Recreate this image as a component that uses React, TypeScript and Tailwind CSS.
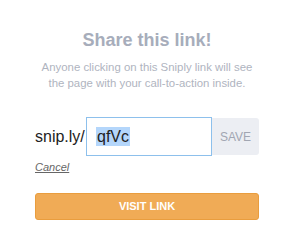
import React from "react";

export default function App() {
  return (
    <div className="w-[300px] h-[250px] bg-white overflow-hidden" style={{ fontFamily: '"Liberation Sans", Arial, sans-serif' }}>
      <div className="ml-[35px] w-[224px] flex flex-col">
        <div className="mt-[29px] text-center text-[18px] font-bold text-[#a7adbb] leading-[22px]">Share this link!</div>
        <div className="mt-[8px] text-center text-[11.4px] leading-[16px] text-[#afb4c0]">
          Anyone clicking on this Sniply link will see<br />the page with your call-to-action inside.
        </div>
        <div className="mt-[26px] flex items-center">
          <span className="text-[16px] text-[#222] w-[51px]">snip.ly/</span>
          <div className="h-[39px] w-[126px] border border-[#8dc0ec] bg-white flex items-center pl-[9px]">
            <span className="text-[16px] text-[#222] bg-[#b4d6fb] leading-[19px] px-[1px]">qfVc</span>
          </div>
          <div className="h-[37px] w-[47px] bg-[#eceef3] rounded-r-[3px] flex items-center justify-center text-[12px] text-[#a1a6b2]">SAVE</div>
        </div>
        <div className="mt-[3px] text-[11px] italic underline text-[#666]">Cancel</div>
        <div className="mt-[17px] h-[27px] rounded-[3px] bg-[#f0ab56] border border-[#e99d3e] flex items-center justify-center text-white font-bold text-[11px]">VISIT LINK</div>
      </div>
    </div>
  );
}
